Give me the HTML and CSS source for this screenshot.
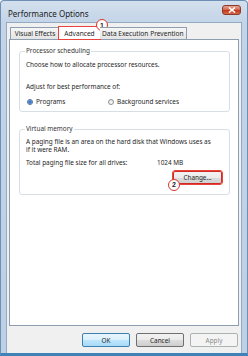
FILE: index.html
```html
<!DOCTYPE html>
<html>
<head>
<meta charset="utf-8">
<link rel="stylesheet" href="styles.css">
</head>
<body>
<div class="window">
  <div class="titlebar">
    <span class="title">Performance Options</span>
    <span class="close"><svg width="8" height="6" viewBox="0 0 8 6"><path d="M1 0.5 L7 5.5 M7 0.5 L1 5.5" stroke="#fff" stroke-width="1.6"/></svg></span>
  </div>
  <div class="client">
    <div class="tabs">
      <div class="tab">Visual Effects</div>
      <div class="tab sel">Advanced<span class="badge b1">1</span></div>
      <div class="tab">Data Execution Prevention</div>
    </div>
    <div class="panel">
      <fieldset class="group g1">
        <legend>Processor scheduling</legend>
        <div class="line l1">Choose how to allocate processor resources.</div>
        <div class="line l2">Adjust for best performance of:</div>
        <div class="radios">
          <label class="radio on"><span class="dot"></span>Programs</label>
          <label class="radio"><span class="dot"></span>Background services</label>
        </div>
      </fieldset>
      <fieldset class="group g2">
        <legend>Virtual memory</legend>
        <div class="line first">A paging file is an area on the hard disk that Windows uses as</div>
        <div class="line">if it were RAM.</div>
        <div class="line total"><span class="lbl">Total paging file size for all drives:</span><span>1024 MB</span></div>
        <div class="changerow"><span class="btn change">Change...<span class="badge b2">2</span></span></div>
      </fieldset>
    </div>
    <div class="buttons">
      <span class="btn def">OK</span>
      <span class="btn">Cancel</span>
      <span class="btn dis">Apply</span>
    </div>
  </div>
</div>
</body>
</html>
```
FILE: styles.css
```css
html, body { margin: 0; padding: 0; }
body {
  width: 248px; height: 356px; overflow: hidden;
  font-family: "Noto Sans", "DejaVu Sans", sans-serif;
  font-size: 6.4px; color: #262626;
  background: #fff;
}
.window {
  width: 248px; height: 356px; box-sizing: border-box;
  border: 1px solid #6d8fb5;
  border-bottom: 3px solid #3f82b8;
  background: linear-gradient(to bottom, #d3e0ee 0px, #c3d4e7 22px, #bcd0e6 100%);
  display: flex; flex-direction: column;
  border-radius: 4px 4px 0 0;
}
.titlebar {
  height: 21px; display: flex; align-items: center; justify-content: space-between;
  padding: 0 6px 0 7px;
}
.title { font-size: 8px; color: #1a1a1a; margin-top: 3px; }
.close {
  width: 19px; height: 10px; box-sizing: border-box;
  border: 1px solid #8b3a2c; border-radius: 3px;
  background: linear-gradient(to bottom, #e9a593 0%, #d56a50 45%, #c4361c 55%, #d9684a 100%);
  display: flex; align-items: center; justify-content: center;
  margin-top: -3px;
}
.client {
  flex: 1; margin: 0 5px 0 5px;
  border: 1px solid #94a9c2; border-bottom: none;
  background: #f0f0f0;
  display: flex; flex-direction: column;
  padding: 3px 2px 0 2px;
}
.tabs { display: flex; height: 13px; padding-left: 1px; align-items: flex-end; position: relative; z-index: 2; font-size: 6.6px; }
.tab {
  height: 12px; box-sizing: border-box; padding: 0 3px;
  border: 1px solid #8e9eb0; border-bottom: none; border-right: none;
  background: linear-gradient(to bottom, #f6f6f6, #e4e4e4);
  display: flex; align-items: center; white-space: nowrap;
  position: relative;
}
.tab:last-child { border-right: 1px solid #8e9eb0; padding-right: 2px; }
.tab:first-child { padding: 0 4px 0 4px; width: 49px; justify-content: center; }
.tab.sel {
  height: 14px; margin-bottom: -1px; background: #fff;
  border: 1px solid #d02b22; border-bottom: none;
  outline: 1px solid #e8443c; outline-offset: -1px;
  padding: 0 5px; margin-left: -1px; margin-right: -1px;
  width: 43px; justify-content: center;
}
.tab.sel + .tab { border-left: none; padding-left: 2px; }
.badge {
  position: absolute; width: 12px; height: 12px; box-sizing: border-box;
  border: 1px solid #d9372f; border-radius: 50%; background: #fff;
  font-weight: bold; font-size: 7px; display: flex; align-items: center; justify-content: center;
  font-family: "Liberation Sans", sans-serif; color: #222;
}
.b1 { right: -8px; top: -8px; }
.b2 { left: -6px; bottom: -8px; }
.panel {
  height: 287px; box-sizing: border-box;
  background: #fff; border: 1px solid #8e9eb0;
  padding: 7px 8px 0 9px;
}
.group {
  margin: 0; padding: 0 6px 0 6px; min-width: 0;
  border: 1px solid #d5dfe5; border-radius: 3px;
}
.group legend { padding: 0 1px; margin-left: -1px; color: #333; line-height: 8px; }
.line { line-height: 7.6px; white-space: nowrap; }
.g1 { height: 65px; box-sizing: border-box; }
.g1 .l1 { margin-top: 6px; }
.g1 .l2 { margin-top: 14px; }
.radios { display: flex; margin-top: 8px; line-height: 7px; }
.radio { display: flex; align-items: center; gap: 3px; width: 81px; }
.dot {
  width: 6px; height: 6px; border-radius: 50%; box-sizing: border-box;
  border: 1px solid #8a8f96; background: linear-gradient(#e8e8e8, #fafafa);
  margin-left: 1px;
}
.radio.on .dot { background: radial-gradient(circle, #2f6fc7 0, #4a86d8 1.5px, #dbe8f7 2.2px); border-color: #4d6f9a; }
.g2 { margin-top: 13px; height: 70px; box-sizing: border-box; }
.g2 .first { margin-top: 5px; }
.total { margin-top: 6px; display: flex; }
.total .lbl { width: 131px; }
.changerow { display: flex; justify-content: flex-end; margin-top: 4px; padding-right: 1px; }
.btn {
  height: 14px; box-sizing: border-box; display: flex; align-items: center; justify-content: center;
  border: 1px solid #707070; border-radius: 2px;
  background: linear-gradient(to bottom, #f2f2f2 0%, #ebebeb 50%, #dddddd 51%, #cfcfcf 100%);
  width: 48px; position: relative;
}
.change { width: 49px; height: 13px; border: 1px solid #d02b22; outline: 1px solid #e8443c; }
.buttons { display: flex; justify-content: flex-end; gap: 6px; margin-top: 7px; padding-right: 1px; }
.btn.def { border-color: #3c7fb1; background: linear-gradient(to bottom, #eaf6fd 0%, #d9f0fc 50%, #bee6fd 51%, #a7d9f5 100%); }
.btn.dis { border-color: #adb2b5; background: #f4f4f4; color: #8c8c8c; }
```
